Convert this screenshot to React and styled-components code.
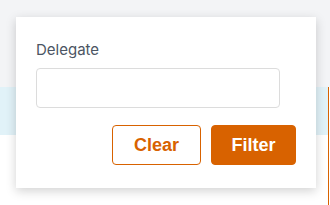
import styled, { createGlobalStyle } from "styled-components";

const GlobalStyle = createGlobalStyle`
    html, body {
        margin: 0;
        padding: 0;
        background: #fff;
    }
    * {
        box-sizing: border-box;
    }
`;

export default function App() {
    return (
        <>
            <GlobalStyle />
            <Page>
                <TopArea />
                <TableArea>
                    <HeaderBand />
                </TableArea>
                <FilterPanel>
                    <Label htmlFor="delegate">Delegate</Label>
                    <Input id="delegate" type="text" />
                    <Actions>
                        <Button variant="outline">Clear</Button>
                        <Button variant="solid">Filter</Button>
                    </Actions>
                </FilterPanel>
            </Page>
        </>
    );
}

const Page = styled.div`
    position: relative;
    width: 330px;
    height: 205px;
    overflow: hidden;
    display: flex;
    flex-direction: column;
    background: #fff;
`;

const TopArea = styled.div`
    height: 87px;
    background: #f3f4f6;
`;

const TableArea = styled.div`
    flex: 1;
    margin-right: 1px;
    border-right: 1px solid #d86200;
`;

const HeaderBand = styled.div`
    height: 48px;
    background: #e1f2f8;
`;

const FilterPanel = styled.div`
    position: absolute;
    left: 16px;
    top: 17px;
    width: 300px;
    height: 171px;
    background: #fff;
    box-shadow: 0 3px 10px rgba(0, 0, 0, 0.18);
    padding: 24px 20px 23px 20px;
    display: flex;
    flex-direction: column;
`;

const Label = styled.label`
    font-family: Inter, "Noto Sans", sans-serif;
    font-size: 15px;
    line-height: 18px;
    color: #4b5563;
    margin-bottom: 9px;
`;

const Input = styled.input`
    width: 244px;
    height: 40px;
    border: 1px solid #dcdcdc;
    border-radius: 4px;
    background: #fff;
    outline: none;
    padding: 0 10px;
`;

const Actions = styled.div`
    display: flex;
    justify-content: flex-end;
    gap: 10px;
    margin-top: 17px;
`;

const Button = styled.button`
    height: 40px;
    width: ${(props) => (props.variant === "outline" ? "89px" : "85px")};
    border-radius: 4px;
    border: 1px solid #d86200;
    background: ${(props) => (props.variant === "outline" ? "#fff" : "#d86200")};
    color: ${(props) => (props.variant === "outline" ? "#d86200" : "#fff")};
    font-family: "Liberation Sans", Arial, sans-serif;
    font-weight: 700;
    font-size: 18px;
    padding: 0;
    cursor: pointer;
`;
